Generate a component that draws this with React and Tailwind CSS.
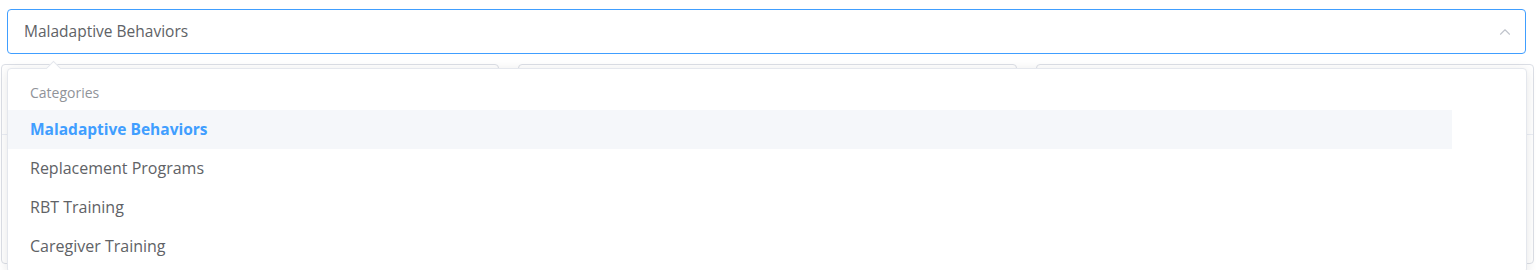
import { ChevronUp } from "lucide-react";

const items = [
  "Maladaptive Behaviors",
  "Replacement Programs",
  "RBT Training",
  "Caregiver Training",
];

const App = () => {
  return (
    <div
      className="relative h-[270px] overflow-hidden bg-white"
      style={{ fontFamily: '"Open Sans", "Noto Sans", sans-serif' }}
    >
      {/* Select input */}
      <div className="px-[7px] pt-[9px] pr-[10px]">
        <div className="flex h-[45px] items-center justify-between rounded-[4px] border border-[#409eff] pl-[16px] pr-[11px]">
          <span className="text-[15.5px] text-[#606266]">Maladaptive Behaviors</span>
          <ChevronUp className="h-[18px] w-[18px] text-[#c0c4cc]" strokeWidth={1.5} />
        </div>
      </div>

      {/* Cards behind */}
      <div className="mt-[10px] grid grid-cols-3 gap-[19px] pl-[1px] pr-[2px]">
        {[0, 1, 2].map((i) => (
          <div key={i} className="h-[200px] rounded-[4px] border border-[#dcdfe6] bg-white">
            <div className="h-[70px] border-b border-[#ebeef5]" />
          </div>
        ))}
      </div>

      {/* Dropdown */}
      <div className="absolute left-[7px] top-[68px] w-[1520px] rounded-[4px] border border-[#e4e7ed] bg-white py-[6px] shadow-[0_2px_12px_0_rgba(0,0,0,0.1)]">
        <div className="absolute -top-[6px] left-[40px] h-[11px] w-[11px] rotate-45 border-l border-t border-[#e4e7ed] bg-white" />
        <div className="w-[1444px]">
          <div className="flex h-[35px] items-center pl-[22px] text-[14px] text-[#909399]">
            Categories
          </div>
          {items.map((item, i) => (
            <div
              key={item}
              className={
                i === 0
                  ? "flex h-[39px] items-center bg-[#f5f7fa] pl-[22px] text-[15.5px] font-bold text-[#409eff]"
                  : "flex h-[39px] items-center pb-[1px] pl-[22px] text-[16px] text-[#606266]"
              }
            >
              {item}
            </div>
          ))}
        </div>
      </div>
    </div>
  );
};

export default App;
